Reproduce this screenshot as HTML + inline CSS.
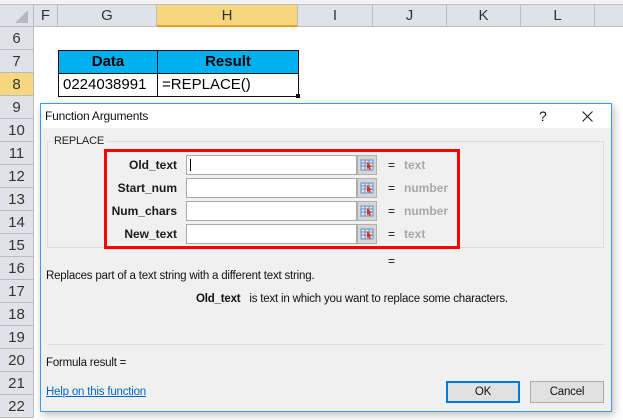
<!DOCTYPE html>
<html><head><style>
*{margin:0;padding:0;box-sizing:border-box}
body{width:623px;height:420px;overflow:hidden;background:#fff;font-family:"Liberation Sans",sans-serif;position:relative}
.a{position:absolute}
.ch{top:5px;height:22px;background:#dfe3e8;border-right:1px solid #b9bcc1;border-bottom:1px solid #b9bcc1;color:#333;font-size:15px;text-align:center;line-height:22px}
.rh{left:0;width:34px;height:23px;background:#dfe3e8;border-bottom:1px solid #b9bcc1;border-right:1px solid #b9bcc1;color:#333;font-size:15px;text-align:center;line-height:23px}
.lbl{font-weight:bold;font-size:12px;color:#1a1a1a;right:446px;text-align:right}
.inp{left:186px;width:171px;height:20px;border:1px solid #a9a9a9;background:#fff}
.btn{left:357px;width:20px;height:20px;background:#d6d6d6;border:1px solid #b0b0b0}
.eq{left:388px;font-size:12px;color:#111}
.val{left:404px;font-size:12px;color:#a8a8a8;font-weight:bold}
.t{font-size:11.5px;color:#111;letter-spacing:-0.2px}
</style></head><body>
<div class="a" style="left:0;top:0;width:623px;height:5px;background:#f3f3f3;border-bottom:1px solid #bfbfbf"></div>
<div class="a ch" style="left:0;width:34px"><svg width="34" height="22"><polygon points="28,5 28,18 15,18" fill="#b5b8bd"/></svg></div>
<div class="a ch" style="left:34px;width:24px">F</div>
<div class="a ch" style="left:58px;width:99px">G</div>
<div class="a ch" style="left:157px;width:141px;background:#f5d77f;border-bottom:2px solid #e3a21a">H</div>
<div class="a ch" style="left:298px;width:75px">I</div>
<div class="a ch" style="left:373px;width:74px">J</div>
<div class="a ch" style="left:447px;width:74px">K</div>
<div class="a ch" style="left:521px;width:74px">L</div>
<div class="a ch" style="left:595px;width:30px"></div>
<div class="a rh" style="top:27px">6</div>
<div class="a rh" style="top:50px">7</div>
<div class="a rh" style="top:73px;background:#f5d77f">8</div>
<div class="a rh" style="top:96px">9</div>
<div class="a rh" style="top:119px">10</div>
<div class="a rh" style="top:142px">11</div>
<div class="a rh" style="top:165px">12</div>
<div class="a rh" style="top:188px">13</div>
<div class="a rh" style="top:211px">14</div>
<div class="a rh" style="top:234px">15</div>
<div class="a rh" style="top:257px">16</div>
<div class="a rh" style="top:280px">17</div>
<div class="a rh" style="top:303px">18</div>
<div class="a rh" style="top:326px">19</div>
<div class="a rh" style="top:349px">20</div>
<div class="a rh" style="top:372px">21</div>
<div class="a rh" style="top:395px">22</div>
<div class="a" style="left:58px;top:50px;width:100px;height:24px;background:#00b0f0;border:1px solid #111;font-weight:bold;font-size:15px;text-align:center;line-height:22px">Data</div>
<div class="a" style="left:157px;top:50px;width:142px;height:24px;background:#00b0f0;border:1px solid #111;border-bottom:1px solid #ed7d31;font-weight:bold;font-size:15px;text-align:center;line-height:22px">Result</div>
<div class="a" style="left:58px;top:73px;width:100px;height:24px;border:1px solid #111;font-size:15px;line-height:22px;padding-left:4px">0224038991</div>
<div class="a" style="left:157px;top:73px;width:142px;height:24px;border:1px solid #111;font-size:15px;line-height:22px;padding-left:4px">=REPLACE()</div>
<div class="a" style="left:296px;top:94px;width:4px;height:4px;background:#111"></div>
<div class="a" style="left:40px;top:103px;width:572px;height:309px;background:#f0f0f0;border:1px solid #3c9ae8;box-shadow:2px 3px 8px rgba(0,0,0,.25)">
<div class="a" style="left:0;top:0;width:570px;height:24px;background:#fff"></div>
<div class="a t" style="left:4px;top:5px;font-size:12px">Function Arguments</div>
<div class="a t" style="left:498px;top:4px;font-size:14px">?</div>
<svg class="a" style="left:541px;top:7px" width="11" height="11"><path d="M0.5 0.5L10.5 10.5M10.5 0.5L0.5 10.5" stroke="#222" stroke-width="1.1"/></svg>
</div>
<div class="a" style="left:47px;top:141px;width:557px;height:107px;border:1px solid #dcdcdc"></div>
<div class="a t" style="left:52px;top:135px;background:#f0f0f0;padding:0 2px;font-size:11px;color:#222">REPLACE</div>
<div class="a" style="left:104px;top:149px;width:356px;height:100px;border:3px solid #f00"></div>
<div class="a lbl" style="top:158px">Old_text</div>
<div class="a lbl" style="top:181px">Start_num</div>
<div class="a lbl" style="top:204px">Num_chars</div>
<div class="a lbl" style="top:227px">New_text</div>
<div class="a inp" style="top:155px"><div style="position:absolute;left:3px;top:3px;width:1px;height:12px;background:#000"></div></div>
<div class="a inp" style="top:178px"></div>
<div class="a inp" style="top:201px"></div>
<div class="a inp" style="top:224px"></div>
<div class="a btn" style="top:155px"><svg width="18" height="18"><rect x="3" y="4" width="12" height="10" fill="#dbe7f5" stroke="#6b8fc0"/><path d="M3 7h12M3 10h12M7 4v10M11 4v10" stroke="#6b8fc0"/><path d="M9 6l5 5-2 0 1 2-1 1-1-2-2 1z" fill="#e03020"/></svg></div>
<div class="a btn" style="top:178px"><svg width="18" height="18"><rect x="3" y="4" width="12" height="10" fill="#dbe7f5" stroke="#6b8fc0"/><path d="M3 7h12M3 10h12M7 4v10M11 4v10" stroke="#6b8fc0"/><path d="M9 6l5 5-2 0 1 2-1 1-1-2-2 1z" fill="#e03020"/></svg></div>
<div class="a btn" style="top:201px"><svg width="18" height="18"><rect x="3" y="4" width="12" height="10" fill="#dbe7f5" stroke="#6b8fc0"/><path d="M3 7h12M3 10h12M7 4v10M11 4v10" stroke="#6b8fc0"/><path d="M9 6l5 5-2 0 1 2-1 1-1-2-2 1z" fill="#e03020"/></svg></div>
<div class="a btn" style="top:224px"><svg width="18" height="18"><rect x="3" y="4" width="12" height="10" fill="#dbe7f5" stroke="#6b8fc0"/><path d="M3 7h12M3 10h12M7 4v10M11 4v10" stroke="#6b8fc0"/><path d="M9 6l5 5-2 0 1 2-1 1-1-2-2 1z" fill="#e03020"/></svg></div>
<div class="a eq" style="top:158px">=</div><div class="a val" style="top:158px">text</div>
<div class="a eq" style="top:181px">=</div><div class="a val" style="top:181px">number</div>
<div class="a eq" style="top:204px">=</div><div class="a val" style="top:204px">number</div>
<div class="a eq" style="top:227px">=</div><div class="a val" style="top:227px">text</div>
<div class="a eq" style="top:254px">=</div>
<div class="a t" style="left:46px;top:270px">Replaces part of a text string with a different text string.</div>
<div class="a t" style="left:196px;top:293px"><b>Old_text</b>&nbsp;&nbsp; is text in which you want to replace some characters.</div>
<div class="a" style="left:47px;top:344px;width:558px;height:1px;background:#dcdcdc"></div>
<div class="a t" style="left:46px;top:357px">Formula result =</div>
<div class="a t" style="left:46px;top:386px;color:#0066cc;text-decoration:underline">Help on this function</div>
<div class="a t" style="left:446px;top:381px;width:74px;height:22px;border:2px solid #0078d7;background:#e1e1e1;text-align:center;line-height:18px">OK</div>
<div class="a t" style="left:530px;top:381px;width:74px;height:22px;border:1px solid #adadad;background:#e1e1e1;text-align:center;line-height:20px">Cancel</div>
</body></html>
